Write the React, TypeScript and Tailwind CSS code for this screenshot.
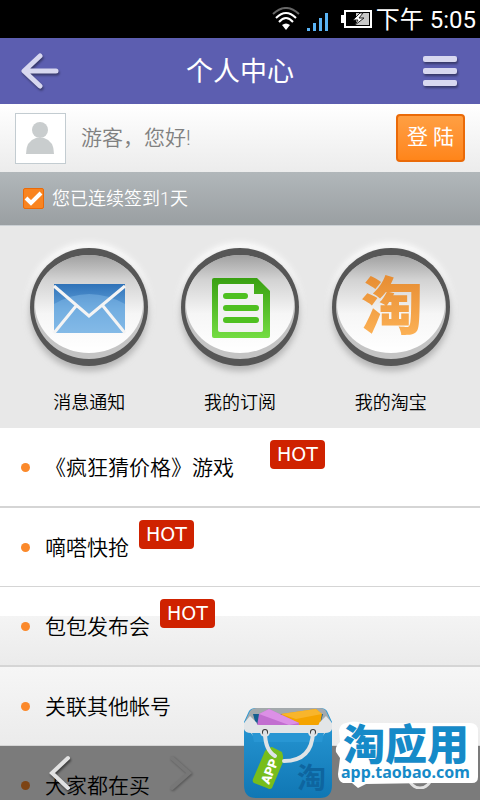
import { useState } from "react";

const FONT = "font-['Roboto','Noto_Sans_CJK_SC',sans-serif]";

interface MenuRow {
  label: string;
  hot?: boolean;
  wide?: boolean;
}

const rows: MenuRow[] = [
  { label: "《疯狂猜价格》游戏", hot: true, wide: true },
  { label: "嘀嗒快抢", hot: true },
  { label: "包包发布会", hot: true },
  { label: "关联其他帐号" },
  { label: "大家都在买" },
];

function StatusBar() {
  return (
    <div className="flex h-[38px] shrink-0 items-center justify-end bg-black pr-1 text-white">
      <svg className="mr-1 h-6 w-7" viewBox="0 0 28 24" fill="none" strokeWidth="2">
        <path d="M1 7Q14-5 27 7" stroke="#666" />
        <path d="M4 11Q14 1 24 11M7 15Q14 7 21 15" stroke="#fff" />
        <path d="M10 18Q14 15 18 18L14 23Z" fill="#fff" />
      </svg>
      <svg className="mr-3 size-6" viewBox="0 0 24 24" fill="#5ab4f5">
        <path d="M3 21h3v3H3zM9 16h3v8H9zM15 11h3v13h-3zM21 6h3v18h-3z" />
      </svg>
      <svg className="mr-1 h-[18px] w-8" viewBox="0 0 32 18">
        <path d="M1 5h3v8H1z" fill="#fff" />
        <path d="M5 1h26v16H5z" fill="none" stroke="#fff" strokeWidth="2" />
        <path d="M16 3h13v12H16z" fill="#c8c8c8" />
        <path d="M20 3l-7 7h5l-3 5 9-7h-5l4-5z" fill="#fff" stroke="#222" strokeWidth="1" />
      </svg>
      <span className="pt-0.5 text-2xl leading-none">下午 5:05</span>
    </div>
  );
}

function Header() {
  return (
    <header className="flex h-[66px] shrink-0 items-center justify-between bg-[#5c5eb0] px-5 text-white">
      <button aria-label="返回" className="drop-shadow-[1px_2px_1px_rgba(0,0,0,0.4)]">
        <svg className="h-9 w-10" viewBox="0 0 40 36" fill="none" stroke="#d8d8f0" strokeWidth="5" strokeLinecap="round" strokeLinejoin="round">
          <path d="M20 3L4 18L20 33M5 18H36" />
        </svg>
      </button>
      <h1 className="pt-0.5 text-[27px]">个人中心</h1>
      <button aria-label="菜单" className="flex w-10 flex-col items-center gap-1.5 drop-shadow-[1px_2px_1px_rgba(0,0,0,0.4)]">
        <span className="h-1.5 w-[34px] rounded-xs bg-[#d8d8f0]" />
        <span className="h-1.5 w-[34px] rounded-xs bg-[#d8d8f0]" />
        <span className="h-1.5 w-[34px] rounded-xs bg-[#d8d8f0]" />
      </button>
    </header>
  );
}

function RoundIcon({ id, children }: { id: string; children: React.ReactNode }) {
  return (
    <svg className="h-[142px] w-[142px]" viewBox="-12 -12 142 142">
      <defs>
        <linearGradient id={`${id}-face`} x1="0" y1="0" x2="0" y2="1">
          <stop offset="0" stopColor="#a0a0a0" />
          <stop offset="0.25" stopColor="#d2d2d2" />
          <stop offset="0.6" stopColor="#f6f6f6" />
          <stop offset="1" stopColor="#fff" />
        </linearGradient>
        <filter id={`${id}-soft`} x="-20%" y="-20%" width="140%" height="140%">
          <feGaussianBlur stdDeviation="3" />
        </filter>
      </defs>
      <circle cx="59" cy="56" r="61" fill="#fff" filter={`url(#${id}-soft)`} />
      <circle cx="59" cy="63" r="60" fill="#b4b4b4" filter={`url(#${id}-soft)`} />
      <circle cx="59" cy="59" r="59" fill="#565656" />
      <ellipse cx="59" cy="59" rx="55" ry="52" fill="#c4c4c4" />
      <ellipse cx="59" cy="56" rx="54" ry="49" fill={`url(#${id}-face)`} />
      {children}
    </svg>
  );
}

function MailArt() {
  return (
    <>
      <defs>
        <linearGradient id="mail-blue" x1="0" y1="0" x2="0" y2="1">
          <stop offset="0" stopColor="#2f72b8" />
          <stop offset="0.5" stopColor="#5f9fd8" />
          <stop offset="1" stopColor="#7db4e3" />
        </linearGradient>
      </defs>
      <path d="M24 36H95V85H24Z" fill="url(#mail-blue)" />
      <path d="M24 56Q59 36 95 56V85H24Z" fill="#8fc4ee" opacity="0.4" />
      <path d="M24 38L59 68L95 38M24 85L46 58M95 85L73 58" fill="none" stroke="#f4f4f4" strokeWidth="3" />
    </>
  );
}

function DocArt() {
  return (
    <>
      <defs>
        <linearGradient id="doc-green" x1="0" y1="0" x2="0" y2="1">
          <stop offset="0" stopColor="#39a012" />
          <stop offset="1" stopColor="#74dc42" />
        </linearGradient>
      </defs>
      <path d="M33 30H76L89 43V88Q89 90 87 90H33Q31 90 31 88V32Q31 30 33 30Z" fill="url(#doc-green)" />
      <path d="M39 36H73V46H82V82Q82 84 80 84H39Q37 84 37 82V38Q37 36 39 36Z" fill="#f2f2f2" />
      <path d="M45 48H64M45 60H75M45 72H75" stroke="#4fc020" strokeWidth="6" strokeLinecap="round" />
    </>
  );
}

function TaobaoArt() {
  return (
    <>
      <defs>
        <linearGradient id="tao-orange" x1="0" y1="0" x2="0" y2="1">
          <stop offset="0" stopColor="#e58a30" />
          <stop offset="1" stopColor="#ffb65a" />
        </linearGradient>
      </defs>
      <text x="60" y="81" textAnchor="middle" fontSize="62" fontWeight="900" fill="url(#tao-orange)">
        淘
      </text>
    </>
  );
}

const shortcuts = [
  { id: "mail", label: "消息通知", art: <MailArt /> },
  { id: "doc", label: "我的订阅", art: <DocArt /> },
  { id: "tao", label: "我的淘宝", art: <TaobaoArt /> },
];

function Watermark() {
  return (
    <svg className="absolute right-0 bottom-0 h-[100px] w-[242px]" viewBox="238 700 242 100">
      <defs>
        <linearGradient id="bag" x1="0" y1="0" x2="0" y2="1">
          <stop offset="0" stopColor="#2a9bd8" />
          <stop offset="1" stopColor="#1077b4" />
        </linearGradient>
      </defs>
      {/* Bag */}
      <path d="M244 722L249 711Q251 708 256 708H320Q325 708 327 711L332 722V785Q332 798 320 798H256Q244 798 244 785Z" fill="url(#bag)" />
      <path d="M245 722L250 711Q252 708 257 708H319Q324 708 326 711L331 722L321 726H256Z" fill="#a3a9ac" />
      <path d="M253 714H323L320 725H256Z" fill="#155f8f" />
      <path d="M281 714L316 709L322 714L320 726H290Z" fill="#f5a400" />
      <path d="M281 714L316 709L322 714L296 719Z" fill="#f8b52c" />
      <path d="M257 726L259 714L269 709L299 723V726Z" fill="#c26fd0" />
      <path d="M259 714L269 709L299 723L289 725Z" fill="#dc90e6" />
      <path d="M244 723L250 716L257 723Q256 725 260 725H316Q320 725 319 723L326 716L332 723V729Q331 733 325 733L319 741H257L251 733Q245 733 244 729Z" fill="#e2e5e7" />
      <path d="M252 733H324L322 742H254Z" fill="#2896d3" />
      <circle cx="265" cy="732" r="5" fill="#e2e5e7" />
      <circle cx="313" cy="732" r="5" fill="#e2e5e7" />
      <circle cx="265" cy="732" r="3" fill="#333" />
      <circle cx="313" cy="732" r="3" fill="#333" />
      <path d="M268 748L272 747L282 752L283 756V762L272 788Q270 790 267 788L254 783Q252 782 253 779L265 751Z" fill="#77bd1c" />
      <path d="M265 732Q265 750 275 756M313 732Q312 761 284 761" fill="none" stroke="#dfe3e6" strokeWidth="4" strokeLinecap="round" />
      <text transform="translate(269 785) rotate(-68)" fontSize="13" fontWeight="900" fill="#fff">
        APP
      </text>
      <text x="297" y="789" fontSize="29" fontWeight="700" fill="#0e659f">
        淘
      </text>

      {/* Store name on its white plate */}
      <path d="M346 723Q354 720 362 723H470Q478 723 478 731V777Q478 783 472 783H430L366 784L358 788L352 783H343Q338 781 338 774L340 758L336 752Q335 746 340 742L339 730Q340 724 346 723Z" fill="#fff" />
      <g fill="#168ac8">
        <text x="343" y="760" fontSize="42" fontWeight="900">
          淘应用
        </text>
        <text x="341" y="778" fontSize="16" fontWeight="700" className="font-['Noto_Sans',sans-serif]">
          app.taobao.com
        </text>
      </g>
    </svg>
  );
}

export default function App() {
  const [signed, setSigned] = useState(true);

  return (
    <div className={`relative flex h-screen flex-col overflow-hidden bg-white ${FONT}`}>
      <StatusBar />
      <Header />

      {/* Visitor */}
      <section className="flex h-[68px] shrink-0 items-center bg-linear-to-b from-white to-[#ececec] px-[15px]">
        <div className="size-[51px] border border-[#c3ccd1] bg-white">
          <svg viewBox="0 0 49 49" fill="#c9cdce">
            <circle cx="24" cy="16" r="8" />
            <path d="M10 40Q10 27 20 24H28Q38 27 38 40Z" />
          </svg>
        </div>
        <p className="ml-[15px] flex-1 pt-0.5 text-[21px] font-[350] text-[#808080]">游客，您好!</p>
        <button className="h-12 w-[69px] rounded-sm border-2 border-[#ea6a08] bg-linear-to-b from-[#ff9f42] to-[#ff8519] text-[21px] text-white">
          登 陆
        </button>
      </section>

      {/* Sign-in streak */}
      <label className="flex h-[54px] shrink-0 items-center border-b border-[#cbd0d4] bg-linear-to-b from-[#b1b7ba] to-[#9a9fa2] pl-[23px] text-lg font-[350] text-white">
        <span className="relative mr-2 size-[21px]">
          <input
            type="checkbox"
            checked={signed}
            onChange={(e) => setSigned(e.target.checked)}
            className="block size-full appearance-none rounded-xs border border-[#ea6a08] bg-[#f98420]"
          />
          {signed && (
            <svg className="pointer-events-none absolute inset-0" viewBox="0 0 21 21" fill="none" stroke="#fff" strokeWidth="4">
              <path d="M3 10L8 15L18 5" />
            </svg>
          )}
        </span>
        您已连续签到1天
      </label>

      {/* Shortcuts */}
      <nav className="grid h-[202px] shrink-0 grid-cols-3 bg-[#e8e8e8] px-3.5 pt-2.5">
        {shortcuts.map((item) => (
          <a key={item.id} href={`#${item.id}`} className="flex flex-col items-center text-lg font-[350] text-black">
            <RoundIcon id={item.id}>{item.art}</RoundIcon>
            <span className="mt-[11px]">{item.label}</span>
          </a>
        ))}
      </nav>

      <ul className="shrink-0">
        {rows.map((row) => (
          <li
            key={row.label}
            className="h-[79px] border-b border-[#d5d5d5] odd:h-20 odd:border-b-2 nth-3:bg-linear-to-b nth-3:from-white nth-3:from-37% nth-3:via-[#f4f4f4] nth-3:via-37% nth-3:to-[#ebebeb] nth-4:bg-linear-to-b nth-4:from-[#f6f6f6] nth-4:to-[#ebebeb] nth-5:bg-[#f6f6f6]"
          >
            <a href="#more" className="flex h-full items-center pl-[21px] text-[21px] font-[350] text-black">
              <span className="mr-[15px] size-[9px] rounded-full bg-[#fb892b]" />
              <span className="pt-1">{row.label}</span>
              {row.hot && (
                <span
                  className={`mt-3 self-start rounded-sm bg-[#cf2200] px-[7px] font-['DejaVu_Sans',sans-serif] text-[19px] leading-[29px] font-normal text-white ${
                    row.wide ? "ml-9" : "ml-2.5"
                  }`}
                >
                  HOT
                </span>
              )}
            </a>
          </li>
        ))}
      </ul>

      {/* Browser controls over the list */}
      <div className="absolute inset-x-0 bottom-0 flex h-[54px] items-center bg-black/50 pl-[49px]">
        <button aria-label="后退" className="drop-shadow-[1px_2px_1px_rgba(0,0,0,0.5)]">
          <svg className="h-9 w-6" viewBox="0 0 24 36" fill="none" stroke="#e2e2e2" strokeWidth="4" strokeLinecap="round">
            <path d="M19 3L3 18L19 33" />
          </svg>
        </button>
        <button aria-label="前进" className="ml-24 drop-shadow-[1px_1px_1px_rgba(0,0,0,0.3)]">
          <svg className="h-9 w-6" viewBox="0 0 24 36" fill="none" stroke="#777" strokeWidth="4" strokeLinecap="round">
            <path d="M3 3L20 18L3 33" />
          </svg>
        </button>
        <button aria-label="刷新" className="mr-11 ml-auto">
          <svg className="size-8" viewBox="0 0 32 32" fill="none" stroke="#e2e2e2" strokeWidth="3">
            <circle cx="16" cy="20" r="11" />
          </svg>
        </button>
      </div>
      <Watermark />
    </div>
  );
}
